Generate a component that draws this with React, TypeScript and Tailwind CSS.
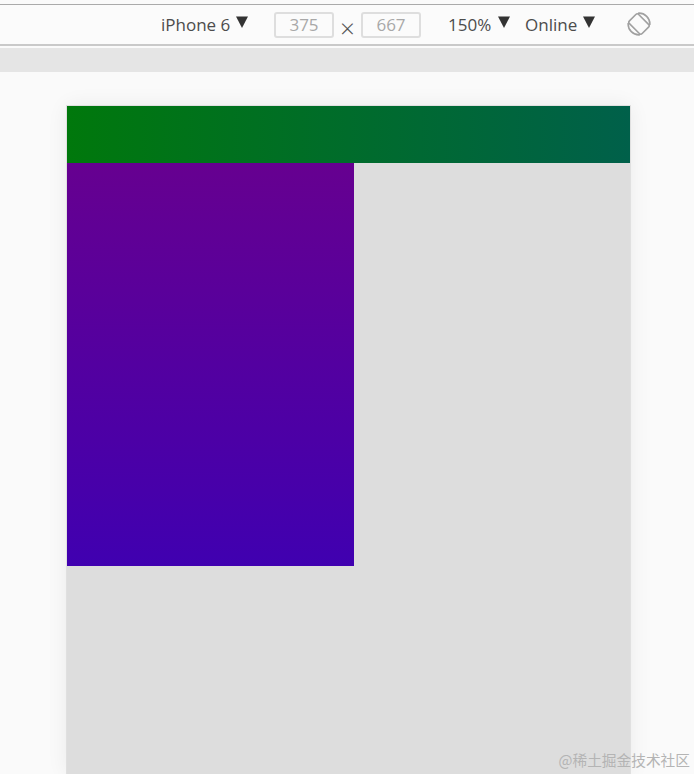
function Caret({ className }: { className: string }) {
  return (
    <svg width="12" height="12" viewBox="0 0 12 12" className={className}>
      <path d="M0 0.5h12L6 12z" fill="#333" />
    </svg>
  );
}

function RotateIcon() {
  return (
    <svg width="24" height="24" viewBox="0 0 24 24" fill="none" stroke="#a0a0a0" strokeWidth="1.6">
      <rect x="5.5" y="3" width="13" height="18" rx="2" transform="rotate(-45 12 12)" />
      <path d="M11 1.2A10.8 10.8 0 0 1 22.8 13M1.2 11A10.8 10.8 0 0 0 13 22.8" />
    </svg>
  );
}

function SizeBox({ value }: { value: string }) {
  return (
    <div className="w-[60px] h-[26px] border-2 border-[#dedede] rounded-[3px] bg-[#fbfbfb] text-[#a8a8a8] flex items-center justify-center">
      {value}
    </div>
  );
}

export default function App() {
  return (
    <div className="relative h-[774px] overflow-hidden bg-[#fafafa] font-['Open_Sans','Noto_Sans',sans-serif]">
      <div className="mt-1 h-[42px] border-t border-t-[#aaaaaa] border-b-2 border-b-[#c9c9c9] bg-[#fbfbfb] flex items-center text-[17px] text-[#4c4c4c] pl-[161px]">
        <span className="w-[69px] whitespace-nowrap">iPhone 6</span>
        <Caret className="ml-[6px] mb-[5px]" />
        <div className="ml-[26px]"><SizeBox value="375" /></div>
        <span className="w-[27px] h-[26px] leading-[26px] text-center mt-[6px] text-[26px] font-light text-[#555]">×</span>
        <SizeBox value="667" />
        <span className="ml-[27px] w-[44px] whitespace-nowrap">150%</span>
        <Caret className="ml-[6px] mb-[5px]" />
        <span className="ml-[15px] w-[52px] whitespace-nowrap">Online</span>
        <Caret className="ml-[6px] mb-[5px]" />
        <div className="ml-[32px] mb-[1px]"><RotateIcon /></div>
      </div>
      <div className="mt-[2px] h-6 bg-[#e5e5e5]" />
      <div className="mt-[34px] ml-[67px] w-[563px] h-[668px] bg-[#dddddd] ring-1 ring-[#e0e0e0] shadow-[0_0_20px_rgba(0,0,0,0.07)]">
        <div className="h-[57px] bg-linear-to-r/srgb from-[#00780c] to-[#00604a]" />
        <div className="w-[287px] h-[403px] bg-linear-to-b/srgb from-[#660090] to-[#4000b0]" />
      </div>
      <div className="absolute right-[4px] bottom-[4px] text-[14.7px] leading-[20px] text-[#b4b4b4] font-['Noto_Sans_CJK_SC',sans-serif]">
        @稀土掘金技术社区
      </div>
    </div>
  );
}
